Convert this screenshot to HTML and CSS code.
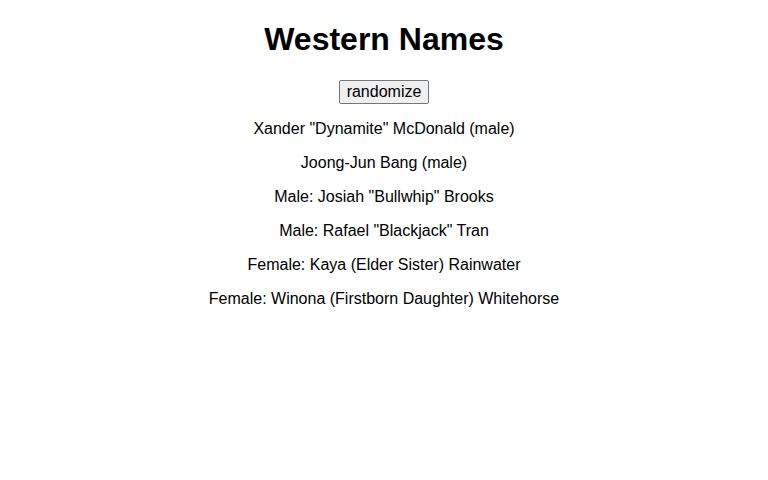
FILE: index.html
```html
<!DOCTYPE html>
<html lang="en">
<head>
    <meta charset="UTF-8">
    <meta name="viewport" content="width=device-width, initial-scale=1.0">
    <title>Western Names</title>
    <link rel="stylesheet" href="styles.css">
</head>
<body>
    <div class="names">
        <h1 class="names__title">Western Names</h1>
        <div class="names__actions">
            <button class="names__button" type="button">randomize</button>
        </div>
        <ul class="names__list">
            <li>Xander "Dynamite" McDonald (male)</li>
            <li>Joong-Jun Bang (male)</li>
            <li>Male: Josiah "Bullwhip" Brooks</li>
            <li>Male: Rafael "Blackjack" Tran</li>
            <li>Female: Kaya (Elder Sister) Rainwater</li>
            <li>Female: Winona (Firstborn Daughter) Whitehorse</li>
        </ul>
    </div>
</body>
</html>
```

FILE: styles.css
```css
html,
body {
    margin: 0;
    padding: 0;
    background: #FFF;
}

body {
    color: #000;
    font-family: "Liberation Sans", Arial, sans-serif;
    font-size: 16px;
}

.names {
    display: flex;
    flex-direction: column;
    align-items: center;
    padding-top: 21px;
}

.names__title {
    margin: 0;
    font-size: 32px;
    font-weight: bold;
    line-height: 37px;
}

.names__actions {
    margin-top: 22px;
}

.names__button {
    padding: 1px 7px;
    font-family: "Liberation Sans", Arial, sans-serif;
    font-size: 16px;
    color: #000;
    background: #EFEFEF;
    border: 1px solid #767676;
    border-radius: 2px;
    height: 24px;
}

.names__list {
    display: flex;
    flex-direction: column;
    align-items: center;
    gap: 16px;
    margin: 16px 0 0;
    padding: 0;
    list-style: none;
}

.names__list li {
    line-height: 18px;
}
```
